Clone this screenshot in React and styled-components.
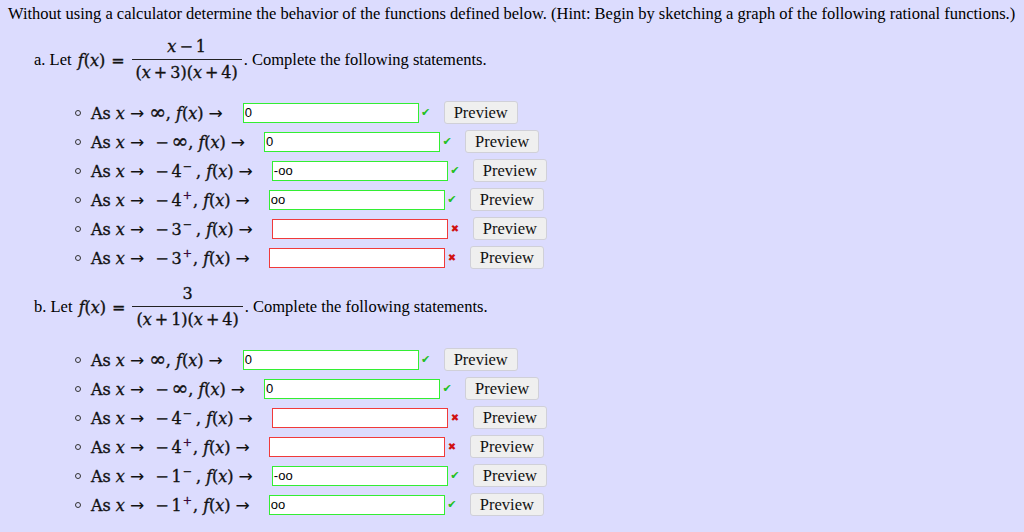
import React from 'react'
import styled, {createGlobalStyle} from 'styled-components'

const Global = createGlobalStyle`
  html, body {
    margin: 0;
    background: #dcdcfe;
  }
  body {
    font-family: 'Liberation Serif', 'Times New Roman', serif;
    font-size: 16.5px;
    color: #000;
  }
`

const Page = styled.div`
  padding: 4px 8px 0 8px;
  width: 1024px;
  height: 532px;
  box-sizing: border-box;
  overflow: hidden;
`

const Intro = styled.div`
  line-height: 20px;
  white-space: nowrap;
`

const Part = styled.div`
  margin-left: 26px;
  margin-top: ${props => props.first ? '11px' : '10px'};
`

const Header = styled.div`
  display: flex;
  align-items: center;
  height: 50px;
`

const Lead = styled.span`
  margin-right: 2px;
`

const M = styled.span`
  font-family: 'DejaVu Serif', 'Liberation Serif', serif;
  font-size: 16px;
  color: #111;
  -webkit-text-stroke: 0.35px #111;
`

const V = styled.i`
  font-style: italic;
`

const Inf = styled.span`
  font-size: 20px;
  line-height: 1;
`

const Eq = styled(M)`
  margin: 0 7px 0 6px;
`

const Frac = styled.span`
  display: inline-flex;
  flex-direction: column;
  align-items: center;
  margin: 0 2px 0 0;
`

const Num = styled(M)`
  line-height: 24px;
  padding: 0 4px;
`

const Den = styled(M)`
  line-height: 25px;
  border-top: 1.3px solid #222;
  padding: 0 4px;
`

const Rows = styled.div`
  margin-top: 13px;
  margin-left: 41px;
`

const Row = styled.div`
  display: flex;
  align-items: center;
  height: 29px;
`

const Bullet = styled.span`
  width: 4px;
  height: 4px;
  border: 1.3px solid #333;
  border-radius: 50%;
  margin-right: 10px;
`

const Label = styled(M)`
  white-space: nowrap;
  margin-right: ${props => props.gap}px;
`

const Arrow = styled.span`
  display: inline-block;
  font-family: 'DejaVu Sans', sans-serif;
  font-size: 17px;
  -webkit-text-stroke: 0;
  margin: 0 ${props => props.wide ? 8 : 5}px 0 5px;
`

const Op = styled.span`
  margin: 0 3px;
`

const Sup = styled.sup`
  font-size: 11px;
  vertical-align: 7px;
  margin-left: 1px;
  margin-right: ${props => props.plus ? 1 : 4}px;
  color: ${props => props.plus ? '#606' : '#333'};
`

const Field = styled.div`
  width: 176px;
  height: 20px;
  box-sizing: border-box;
  background: #fff;
  border: 1.5px solid ${props => props.ok ? '#33ee33' : '#f03a3a'};
  font-family: 'Liberation Sans', Arial, sans-serif;
  font-size: 13px;
  line-height: 17px;
  padding-left: 1px;
  color: #000;
`

const Mark = styled.span`
  width: 10px;
  text-align: center;
  font-family: 'DejaVu Sans', sans-serif;
  font-size: ${props => props.ok ? '11px' : '10px'};
  color: ${props => props.ok ? '#22c022' : '#d01010'};
  margin-left: 2px;
`

const Button = styled.div`
  margin-left: 13px;
  height: 23px;
  box-sizing: border-box;
  padding: 0 9px;
  display: flex;
  align-items: center;
  background: #efefef;
  border: 1px solid #d0d0d8;
  border-radius: 3px;
  font-size: 16.5px;
  color: #111;
`

const fx = <><V>f</V>(<V>x</V>)</>

function Target({value}) {
  if (value === 'inf') return <Inf>∞</Inf>
  if (value === '-inf') return <><Op>−</Op><Inf>∞</Inf></>
  const [n, side] = value
  return <><Op>−</Op>{n}<Sup plus={side === '+'}>{side === '+' ? '+' : '−'}</Sup></>
}

function Statement({target, answer, ok}) {
  return (
    <Row>
      <Bullet/>
      <Label gap={target === 'inf' ? 15 : 14}>
        As <V>x</V><Arrow wide={target !== 'inf'}>→</Arrow><Target value={target}/>, {fx}<Arrow>→</Arrow>
      </Label>
      <Field ok={ok}>{answer}</Field>
      <Mark ok={ok}>{ok ? '✔' : '✖'}</Mark>
      <Button>Preview</Button>
    </Row>
  )
}

const partA = [
  {target: 'inf', answer: '0', ok: true},
  {target: '-inf', answer: '0', ok: true},
  {target: ['4', '-'], answer: '-oo', ok: true},
  {target: ['4', '+'], answer: 'oo', ok: true},
  {target: ['3', '-'], answer: '', ok: false},
  {target: ['3', '+'], answer: '', ok: false},
]

const partB = [
  {target: 'inf', answer: '0', ok: true},
  {target: '-inf', answer: '0', ok: true},
  {target: ['4', '-'], answer: '', ok: false},
  {target: ['4', '+'], answer: '', ok: false},
  {target: ['1', '-'], answer: '-oo', ok: true},
  {target: ['1', '+'], answer: 'oo', ok: true},
]

function PartBlock({letter, num, den, items, first}) {
  return (
    <Part first={first}>
      <Header>
        <Lead>{letter}. Let&nbsp;</Lead>
        <M>{fx}</M>
        <Eq>=</Eq>
        <Frac>
          <Num>{num}</Num>
          <Den>{den}</Den>
        </Frac>
        <span>. Complete the following statements.</span>
      </Header>
      <Rows>
        {items.map((it, i) => <Statement key={i} {...it}/>)}
      </Rows>
    </Part>
  )
}

export default function App() {
  return (
    <Page>
      <Global/>
      <Intro>Without using a calculator determine the behavior of the functions defined below. (Hint: Begin by sketching a graph of the following rational functions.)</Intro>
      <PartBlock
        first
        letter="a"
        num={<><V>x</V><Op>−</Op>1</>}
        den={<>(<V>x</V><Op>+</Op>3)(<V>x</V><Op>+</Op>4)</>}
        items={partA}
      />
      <PartBlock
        letter="b"
        num={<>3</>}
        den={<>(<V>x</V><Op>+</Op>1)(<V>x</V><Op>+</Op>4)</>}
        items={partB}
      />
    </Page>
  )
}
